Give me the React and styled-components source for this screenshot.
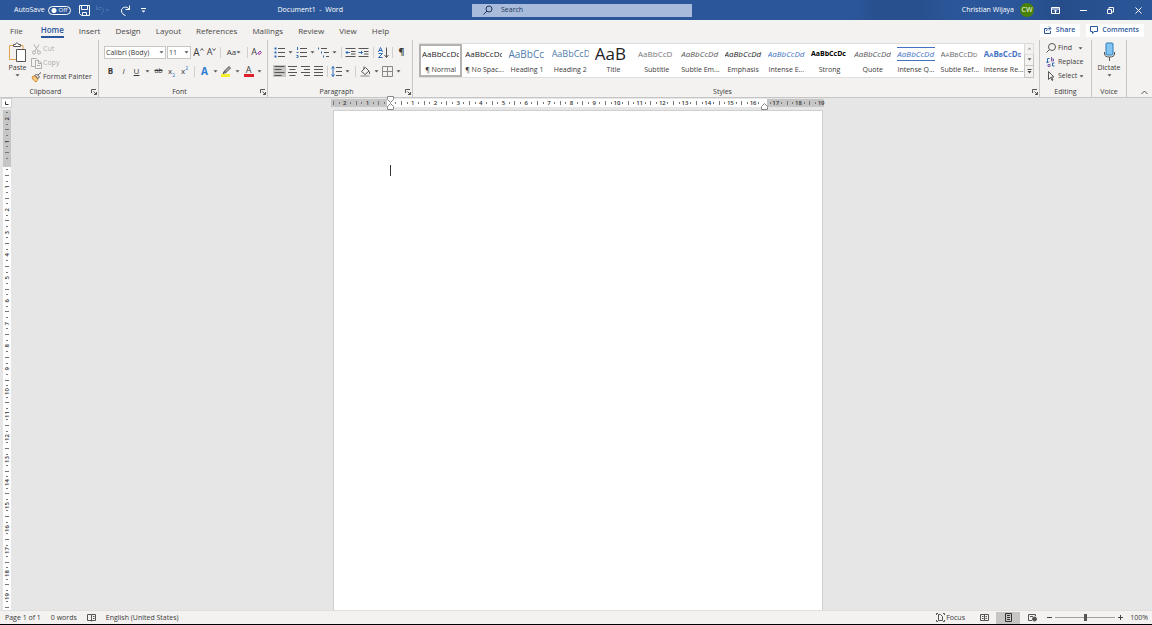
import React from "react";
import styled, { createGlobalStyle, css } from "styled-components";

const Global = createGlobalStyle`
  *, *::before, *::after { box-sizing: border-box; }
  html, body, #root { height: 100%; margin: 0; }
  body { font-family: "Open Sans", "Noto Sans", sans-serif; font-size: 7px; line-height: 10px; color: #3b3a39; overflow: hidden; }
  button, input, select { font: inherit; color: inherit; }
  button { border: 0; padding: 0; background: none; }
`;

/* ---------- shared parts ---------- */

const Window = styled.div`
  display: flex;
  flex-direction: column;
  height: 100vh;
  background: #e6e6e6;
  border-bottom: 1px solid #000;
`;

const Glyph = styled.svg`
  display: block;
  flex: none;
  width: ${(p) => p.$w || 11}px;
  height: ${(p) => p.$h || p.$w || 11}px;
  fill: none;
  stroke: ${(p) => p.$color || "#555"};
  stroke-width: 1;
`;

const Svg = ({ w = 11, h, color, children }) => (
  <Glyph $w={w} $h={h} $color={color} viewBox={`0 0 ${w} ${h || w}`} aria-hidden="true">
    {children}
  </Glyph>
);

const Arrow = ({ color = "#555" }) => (
  <Svg w={5} h={3} color="none">
    <path d="M0.5 0.3h4L2.5 2.5z" fill={color} />
  </Svg>
);

const IconButton = styled.button`
  display: flex;
  align-items: center;
  justify-content: center;
  flex: none;
  width: ${(p) => p.$w || 13}px;
  height: ${(p) => p.$h || 12}px;
  background: ${(p) => (p.$on ? "#c8c6c4" : "transparent")};
`;

const Divider = styled.span`
  flex: none;
  width: 1px;
  height: 11px;
  margin: 0 ${(p) => p.$gap || 2}px;
  background: #d2d0ce;
`;

const ArrowButton = ({ label }) => (
  <IconButton $w={9} aria-label={label}>
    <Arrow />
  </IconButton>
);

/* ---------- title bar ---------- */

const TitleBar = styled.header`
  display: grid;
  grid-template-columns: 1fr 220px 1fr;
  align-items: center;
  flex: none;
  height: 20px;
  padding-left: 12px;
  color: #fff;
  background: linear-gradient(90deg, #2b579a 0 74%, #28508f 76% 80%, #2b579a 83% 88%, #264d8a 92%, #2b579a);
`;

const TitleSide = styled.div`
  display: flex;
  align-items: center;
  justify-content: ${(p) => (p.$end ? "flex-end" : "flex-start")};
`;

const AutoSave = styled.label`
  display: flex;
  align-items: center;
  gap: 3px;
  margin: 0 7px 0 2px;
`;

const Switch = styled.span`
  display: grid;
  align-items: center;
  width: 23px;
  height: 9px;
  font-size: 6px;
  line-height: 9px;
  & > * { grid-area: 1 / 1; }
  & > span { padding-left: 11px; }
`;

const SwitchInput = styled.input`
  appearance: none;
  width: 23px;
  height: 9px;
  margin: 0;
  border: 1px solid #fff;
  border-radius: 5px;
  background: radial-gradient(circle at 5px 50%, #fff 0 2px, transparent 3px);
`;

const DocTitle = styled.h1`
  margin: 0 129px 0 auto;
  font-size: 7px;
  font-weight: 400;
  white-space: pre;
`;

const SearchBox = styled.label`
  display: flex;
  align-items: center;
  gap: 8px;
  height: 13px;
  padding-left: 11px;
  background: #a9bbdb;
`;

const SearchInput = styled.input`
  flex: 1;
  min-width: 0;
  padding: 0;
  border: 0;
  outline: 0;
  background: none;
  color: #1c3660;
  &::placeholder { color: #1c3660; opacity: 1; }
`;

const Avatar = styled.span`
  width: 14px;
  height: 14px;
  margin: 0 7px 0 6px;
  border-radius: 50%;
  background: #498205;
  line-height: 14px;
  text-align: center;
`;

function TitleRow() {
  return (
    <TitleBar>
      <TitleSide>
        <AutoSave>
          AutoSave
          <Switch>
            <SwitchInput type="checkbox" role="switch" />
            <span>Off</span>
          </Switch>
        </AutoSave>
        <IconButton aria-label="Save" $w={14}>
          <Svg w={11} color="#fff">
            <path d="M0.5 0.5h10v10h-8l-2-2zM2.5 0.5v4h6v-4M3.5 10.5v-3h4v3" />
          </Svg>
        </IconButton>
        <IconButton aria-label="Undo" $w={21}>
          <Svg w={10} color="#4a70ad">
            <path d="M1.5 0.5v4h4M1.5 4.5C4 1 9 2 8.5 6L6 9.5" />
          </Svg>
          <Arrow color="#4a70ad" />
        </IconButton>
        <IconButton aria-label="Redo" $w={26}>
          <Svg w={11} color="#fff">
            <path d="M9.5 0.5v4h-4M9.5 4.5C7 0.5 1 2 1.5 6c0 2 2 4 4 4.5" />
          </Svg>
        </IconButton>
        <IconButton aria-label="Customize Quick Access Toolbar" $w={9}>
          <Svg w={5} h={5} color="#fff">
            <path d="M0 0.5h5" />
            <path d="M0.5 2.5h4L2.5 4.5z" fill="#fff" stroke="none" />
          </Svg>
        </IconButton>
        <DocTitle>Document1  -  Word</DocTitle>
      </TitleSide>
      <SearchBox>
        <Svg w={10} color="#1c3660">
          <circle cx="6" cy="4" r="3" />
          <path d="M4 6L0.5 9.5" />
        </Svg>
        <SearchInput type="search" placeholder="Search" aria-label="Search" />
      </SearchBox>
      <TitleSide $end>
        <span>Christian Wijaya</span>
        <Avatar>CW</Avatar>
        <IconButton $w={28} aria-label="Ribbon Display Options">
          <Svg w={9} h={7} color="#fff">
            <path d="M0.5 0.5h8v6h-8zM0.5 2h8M4.5 6V3M3 4.5L4.5 3 6 4.5" />
          </Svg>
        </IconButton>
        <IconButton $w={28} aria-label="Minimize">
          <Svg w={7} color="#fff"><path d="M0 3.5h7" /></Svg>
        </IconButton>
        <IconButton $w={27} aria-label="Restore">
          <Svg w={7} color="#fff"><path d="M0.5 2.5h4v4h-4zM2 2.5v-2h4.5v4.5h-2" /></Svg>
        </IconButton>
        <IconButton $w={28} aria-label="Close">
          <Svg w={7} color="#fff"><path d="M0.5 0.5l6 6M6.5 0.5l-6 6" /></Svg>
        </IconButton>
      </TitleSide>
    </TitleBar>
  );
}

/* ---------- tabs ---------- */

const TabRow = styled.nav`
  display: flex;
  align-items: center;
  flex: none;
  height: 20px;
  padding: 0 8px 0 3px;
  background: #f3f2f1;
`;

const Tab = styled.button`
  height: 20px;
  padding: 0 8px 0 7px;
  font-size: 8px;
  line-height: 19px;
  color: #4a4846;
  &:first-child { margin-right: 3px; }
  ${(p) => p.$active && css`
    color: #2b579a;
    font-weight: 600;
    & > span {
      display: block;
      height: 16px;
      line-height: 15px;
      border-bottom: 2px solid #2b579a;
    }
  `}
`;

const TabAction = styled.button`
  display: flex;
  align-items: center;
  gap: 4px;
  height: 13px;
  padding: 0 5px 0 4px;
  background: #fff;
  color: #2b579a;
  font-weight: 600;
`;

const TabActions = styled.div`
  display: flex;
  gap: 6px;
  margin-left: auto;
`;

const TABS = ["File", "Home", "Insert", "Design", "Layout", "References", "Mailings", "Review", "View", "Help"];

function Tabs() {
  return (
    <TabRow>
      {TABS.map((t) => (
        <Tab key={t} $active={t === "Home"}><span>{t}</span></Tab>
      ))}
      <TabActions>
        <TabAction>
          <Svg w={8} color="#2b579a"><path d="M3 2.5H0.5v5h6V5M2.5 5c0-2 1.5-2.5 4-2.5M5 0.5l2 2-2 2" /></Svg>
          Share
        </TabAction>
        <TabAction>
          <Svg w={8} color="#2b579a"><path d="M0.5 0.5h7v5H4L2.5 7.5V5.5h-2z" /></Svg>
          Comments
        </TabAction>
      </TabActions>
    </TabRow>
  );
}

/* ---------- ribbon ---------- */

const RibbonBar = styled.section`
  display: flex;
  flex: none;
  height: 58px;
  background: #f3f2f1;
  border-bottom: 1px solid #c8c6c4;
`;

const Group = styled.div`
  display: flex;
  flex-direction: column;
  flex: ${(p) => (p.$w ? "none" : "1")};
  min-width: 0;
  width: ${(p) => (p.$w ? p.$w + "px" : "auto")};
  border-right: 1px solid #c8c6c4;
`;

const GroupBody = styled.div`
  display: flex;
  flex: 1;
  flex-direction: ${(p) => (p.$column ? "column" : "row")};
  gap: ${(p) => p.$gap || 0}px;
  padding: ${(p) => p.$pad || "0"};
`;

const GroupFoot = styled.div`
  display: grid;
  grid-template-columns: 1fr auto;
  align-items: center;
  height: 11px;
  text-align: center;
`;

const Launcher = styled.button`
  display: flex;
  width: 7px;
`;

function RibbonGroup({ name, width, launcher = true, children, ...body }) {
  return (
    <Group $w={width} role="group" aria-label={name}>
      <GroupBody {...body}>{children}</GroupBody>
      <GroupFoot>
        <span>{name}</span>
        {launcher && (
          <Launcher aria-label={`${name} settings`}>
            <Svg w={6}><path d="M0.5 4V0.5H5M2.5 2.5l3 3M5.5 3v2.5H3" /></Svg>
          </Launcher>
        )}
      </GroupFoot>
    </Group>
  );
}

const Row = styled.div`
  display: flex;
  align-items: center;
  height: 12px;
`;

const BigButton = styled.button`
  display: flex;
  flex-direction: column;
  align-items: center;
  gap: 1px;
  width: ${(p) => p.$w}px;
  height: 40px;
`;

const Stack = styled.div`
  display: flex;
  flex-direction: column;
  align-items: flex-start;
`;

const TextButton = styled.button`
  display: flex;
  align-items: center;
  gap: ${(p) => p.$gap || 2}px;
  height: 14px;
  white-space: nowrap;
  color: ${(p) => (p.disabled ? "#b1afad" : "#3b3a39")};
`;

const Combo = styled.div`
  display: grid;
  align-items: center;
  width: ${(p) => p.$w}px;
  height: 13px;
  border: 1px solid #c8c6c4;
  background: #fff;
  margin-right: 1px;
  & > * { grid-area: 1 / 1; }
  & > svg { justify-self: end; margin-right: 1px; pointer-events: none; }
`;

const Select = styled.select`
  appearance: none;
  width: 100%;
  height: 11px;
  padding: 0 0 0 1px;
  border: 0;
  background: none;
  line-height: 11px;
`;

const Letter = styled.span`
  font-size: ${(p) => p.$size || 8}px;
  line-height: 10px;
  font-weight: ${(p) => (p.$bold ? 700 : 400)};
  font-style: ${(p) => (p.$italic ? "italic" : "normal")};
  text-decoration: ${(p) => p.$line || "none"};
  & sub, & sup { font-size: 5px; line-height: 0; color: #2b6cb5; }
`;

const Painted = styled.span`
  display: block;
  width: 10px;
  height: 11px;
  font-size: 9px;
  line-height: 8px;
  text-align: center;
  border-bottom: 3px solid ${(p) => p.$color};
`;

const Outlined = styled.span`
  font-size: 10px;
  line-height: 11px;
  font-weight: 700;
  color: #2b7cd3;
`;

function Clipboard() {
  return (
    <RibbonGroup name="Clipboard" width={99} $pad="2px 0 0 6px" $gap={2}>
      <BigButton $w={23}>
        <Svg w={17} h={20}>
          <path d="M4 3.5H0.5v14H7M11 3.5h3V7" stroke="#e3a04b" />
          <path d="M4.5 4.5v-2h2c0-2 3-2 3 0h2v2z" fill="#fff" />
          <path d="M7.5 7.5h9v12h-9z" fill="#fff" />
        </Svg>
        <span>Paste</span>
        <Arrow />
      </BigButton>
      <Stack>
        <TextButton disabled $gap={1}>
          <Svg w={11} color="#b1afad"><path d="M3 0.5L7 7M8 0.5L4 7" /><circle cx="3" cy="8.5" r="1.5" /><circle cx="8" cy="8.5" r="1.5" /></Svg>
          Cut
        </TextButton>
        <TextButton disabled $gap={1}>
          <Svg w={11} color="#b1afad"><path d="M4 8.5H0.5v-8h5l1 1M4.5 2.5H8l2.5 2.5v5.5h-6zM7.5 3v2.5h3M6 7.5h3" /></Svg>
          Copy
        </TextButton>
        <TextButton $gap={1}>
          <Svg w={11}><path d="M1 5l3-1.5L7 7 5 10c-2-1-3-2-4-5z" fill="#f6c98a" stroke="#d98b2b" /><path d="M4 3.5L5.5 2 8.5 5 7 6.5zM7 3l3-2.5" /></Svg>
          Format Painter
        </TextButton>
      </Stack>
    </RibbonGroup>
  );
}

function FontGroup() {
  return (
    <RibbonGroup name="Font" width={169} $column $gap={7} $pad="6px 0 0 5px">
      <Row>
        <Combo $w={62}>
          <Select aria-label="Font"><option>Calibri (Body)</option></Select>
          <Arrow />
        </Combo>
        <Combo $w={24}>
          <Select aria-label="Font size"><option>11</option></Select>
          <Arrow />
        </Combo>
        <IconButton aria-label="Increase font size">
          <Letter $size={10}>A</Letter>
          <Svg w={4} h={9}><path d="M0.5 2.5l1.5-2 1.5 2" /></Svg>
        </IconButton>
        <IconButton aria-label="Decrease font size">
          <Letter $size={9}>A</Letter>
          <Svg w={4} h={9}><path d="M0.5 0.5l1.5 2 1.5-2" /></Svg>
        </IconButton>
        <Divider />
        <IconButton $w={22} aria-label="Change case"><Letter $size={8}>Aa</Letter><Arrow /></IconButton>
        <Divider />
        <IconButton aria-label="Clear formatting">
          <Letter $size={9}>A</Letter>
          <Svg w={5}><path d="M0.5 3.5L3 1l1.5 1.5-2 2z" stroke="#a349a4" fill="#e3b9e3" /></Svg>
        </IconButton>
      </Row>
      <Row>
        <IconButton aria-label="Bold"><Letter $bold>B</Letter></IconButton>
        <IconButton aria-label="Italic"><Letter $italic>I</Letter></IconButton>
        <IconButton aria-label="Underline"><Letter $line="underline">U</Letter></IconButton>
        <ArrowButton label="Underline style" />
        <IconButton aria-label="Strikethrough"><Letter $size={7} $line="line-through">ab</Letter></IconButton>
        <IconButton aria-label="Subscript"><Letter>x<sub>2</sub></Letter></IconButton>
        <IconButton aria-label="Superscript"><Letter>x<sup>2</sup></Letter></IconButton>
        <Divider $gap={3} />
        <IconButton aria-label="Text effects"><Outlined>A</Outlined></IconButton>
        <ArrowButton label="Text effects options" />
        <IconButton aria-label="Highlight">
          <Svg w={11}>
            <path d="M3.5 5L8 0.5 9.5 2 5 6.5zM3.5 5L2 7.5 5 6.5" fill="#aaa" />
            <path d="M0 9.5h9" stroke="#f5f02a" strokeWidth="3" />
          </Svg>
        </IconButton>
        <ArrowButton label="Highlight colour" />
        <IconButton aria-label="Font color"><Painted $color="#e0202c">A</Painted></IconButton>
        <ArrowButton label="Font colour options" />
      </Row>
    </RibbonGroup>
  );
}

const LINES = {
  left: "M0.5 1.5h10M0.5 4.5h7M0.5 7.5h10M0.5 10.5h7",
  center: "M1 1.5h9M2.5 4.5h6M1 7.5h9M2.5 10.5h6",
  right: "M1 1.5h9M4 4.5h6M1 7.5h9M4 10.5h6",
  justify: "M1 1.5h9M1 4.5h9M1 7.5h9M1 10.5h9",
};

function Paragraph() {
  return (
    <RibbonGroup name="Paragraph" width={145} $column $gap={7} $pad="6px 0 0 5px">
      <Row>
        <IconButton aria-label="Bullets">
          <Svg><path d="M4 1.5h7M4 5.5h7M4 9.5h7" /><path d="M0.5 1.5h2M0.5 5.5h2M0.5 9.5h2" stroke="#2b6cb5" strokeWidth="2" /></Svg>
        </IconButton>
        <ArrowButton label="Bullet library" />
        <IconButton aria-label="Numbering">
          <Svg><path d="M4 1.5h7M4 5.5h7M4 9.5h7" /><path d="M1.5 0v3M0.5 5.5h2M0.5 8.5h1.5v2H0.5" stroke="#2b6cb5" /></Svg>
        </IconButton>
        <ArrowButton label="Numbering library" />
        <IconButton aria-label="Multilevel list">
          <Svg><path d="M3 1.5h6M6 5.5h5M8 9.5h3" /><path d="M0.5 0.5v2M3.5 4.5v2M5.5 8.5v2" stroke="#2b6cb5" /></Svg>
        </IconButton>
        <ArrowButton label="List library" />
        <Divider />
        <IconButton aria-label="Decrease indent">
          <Svg><path d="M0.5 1.5h10M6 4.5h4.5M6 7h4.5M0.5 9.5h10" /><path d="M5 5.5H1M2.5 4L1 5.5 2.5 7" stroke="#2b6cb5" /></Svg>
        </IconButton>
        <IconButton aria-label="Increase indent">
          <Svg><path d="M0.5 1.5h10M6 4.5h4.5M6 7h4.5M0.5 9.5h10" /><path d="M0.5 5.5h4M3 4l1.5 1.5L3 7" stroke="#2b6cb5" /></Svg>
        </IconButton>
        <Divider $gap={3} />
        <IconButton aria-label="Sort">
          <Svg><path d="M0.5 5L2.5 0.5 4.5 5M1 3.5h3M0.5 6.5h4l-4 4h4" stroke="#2b6cb5" /><path d="M8.5 0.5v10M6.5 8l2 2.5 2-2.5" /></Svg>
        </IconButton>
        <Divider />
        <IconButton aria-label="Show paragraph marks"><Letter $size={9} $bold>¶</Letter></IconButton>
      </Row>
      <Row>
        {Object.entries(LINES).map(([k, d]) => (
          <IconButton key={k} aria-label={`Align ${k}`} $on={k === "left"}>
            <Svg h={12}><path d={d} /></Svg>
          </IconButton>
        ))}
        <Divider />
        <IconButton aria-label="Line spacing">
          <Svg><path d="M5 1.5h6M5 5.5h6M5 9.5h6" /><path d="M2 0.5v10M0.5 2.5L2 0.5l1.5 2M0.5 8.5l1.5 2 1.5-2" stroke="#2b6cb5" /></Svg>
        </IconButton>
        <ArrowButton label="Line spacing options" />
        <Divider $gap={3} />
        <IconButton aria-label="Shading">
          <Svg><path d="M1.5 5.5L5.5 1.5 9 5 5 8.5zM4 3V0.5M9.5 5.5v2.5" /><path d="M0.5 10h9" stroke="#bbb" strokeWidth="2" /></Svg>
        </IconButton>
        <ArrowButton label="Shading colour" />
        <IconButton aria-label="Borders">
          <Svg><path d="M0.5 0.5h10v10h-10zM5.5 0.5v10M0.5 5.5h10" stroke="#888" /></Svg>
        </IconButton>
        <ArrowButton label="Border options" />
      </Row>
    </RibbonGroup>
  );
}

/* ---------- style gallery ---------- */

const Gallery = styled.div`
  display: grid;
  grid-template-columns: repeat(14, minmax(0, 1fr));
  flex: 1;
  height: 35px;
  background: #fff;
  border: 1px solid #e1dfdd;
  border-width: 1px 0;
`;

const StyleTile = styled.button`
  display: flex;
  flex-direction: column;
  justify-content: space-between;
  min-width: 0;
  padding: 2px 3px;
  ${(p) => p.$on && css`box-shadow: inset 0 0 0 2px #b5b3b1;`}
`;

const Sample = styled.span`
  display: flex;
  align-items: center;
  width: 100%;
  height: 16px;
  overflow: hidden;
  white-space: nowrap;
  text-align: left;
  font-size: ${(p) => p.$size || 8}px;
  line-height: 16px;
  color: ${(p) => p.$color || "#222"};
  font-weight: ${(p) => (p.$bold ? 700 : 400)};
  font-style: ${(p) => (p.$italic ? "italic" : "normal")};
  font-variant-caps: ${(p) => (p.$caps ? "small-caps" : "normal")};
  ${(p) => p.$ruled && css`
    height: 14px;
    margin-top: 1px;
    border: solid #4472c4;
    border-width: 1px 0;
  `}
`;

const TileName = styled.span`
  width: 100%;
  text-align: center;
  white-space: nowrap;
`;

const GalleryNav = styled.div`
  display: grid;
  grid-template-rows: repeat(3, 1fr);
  width: 10px;
  height: 35px;
  & > button {
    display: flex;
    align-items: center;
    justify-content: center;
    border: 1px solid #c8c6c4;
  }
  & > button:first-child { opacity: 0.5; }
  & > button + button { border-top: 0; }
`;

const STYLES = [
  { name: "¶ Normal", text: "AaBbCcDc", $on: true },
  { name: "¶ No Spac...", text: "AaBbCcDc" },
  { name: "Heading 1", text: "AaBbCc", $size: 10, $color: "#4f7cab" },
  { name: "Heading 2", text: "AaBbCcD", $size: 9, $color: "#4f7cab" },
  { name: "Title", text: "AaB", $size: 17 },
  { name: "Subtitle", text: "AaBbCcD", $color: "#777" },
  { name: "Subtle Em...", text: "AaBbCcDd", $italic: true, $color: "#555" },
  { name: "Emphasis", text: "AaBbCcDd", $italic: true },
  { name: "Intense E...", text: "AaBbCcDd", $italic: true, $color: "#4472c4" },
  { name: "Strong", text: "AaBbCcDc", $size: 7, $bold: true, $color: "#000" },
  { name: "Quote", text: "AaBbCcDd", $italic: true, $color: "#555" },
  { name: "Intense Q...", text: "AaBbCcDd", $italic: true, $color: "#4472c4", $ruled: true },
  { name: "Subtle Ref...", text: "AaBbCcDd", $caps: true, $color: "#666" },
  { name: "Intense Re...", text: "AaBbCcDd", $caps: true, $bold: true, $color: "#4472c4" },
];

function Styles() {
  return (
    <RibbonGroup name="Styles" $pad="3px 5px 0 6px">
      <Gallery>
        {STYLES.map(({ name, text, $on, ...look }) => (
          <StyleTile key={name} $on={$on}>
            <Sample {...look}>{text}</Sample>
            <TileName>{name}</TileName>
          </StyleTile>
        ))}
      </Gallery>
      <GalleryNav>
        <button aria-label="Previous styles"><Svg w={5} h={3} color="none"><path d="M0.5 2.5h4L2.5 0.5z" fill="#555" /></Svg></button>
        <button aria-label="Next styles"><Arrow /></button>
        <button aria-label="More styles"><Svg w={5} color="none"><path d="M0.5 0h4v1h-4zM0.5 2h4L2.5 4.5z" fill="#444" /></Svg></button>
      </GalleryNav>
    </RibbonGroup>
  );
}

const RibbonEnd = styled.div`
  display: flex;
  align-items: flex-end;
  justify-content: flex-end;
  width: 25px;
`;

function Ribbon() {
  return (
    <RibbonBar>
      <Clipboard />
      <FontGroup />
      <Paragraph />
      <Styles />
      <RibbonGroup name="Editing" width={52} launcher={false} $pad="1px 0 0 6px">
        <Stack>
          <TextButton>
            <Svg w={10}><circle cx="6" cy="4" r="3.5" /><path d="M3.5 6.5l-3 3" /></Svg>
            Find&nbsp;&nbsp;<Arrow />
          </TextButton>
          <TextButton>
            <Svg w={10}><path d="M3.5 1.5H1.5V6M0 4.5L1.5 6 3 4.5M8.5 6h-2v3h2" stroke="#2b6cb5" /><path d="M5.5 0v4h2v-2h-2M2 9.5h2v-2H2z" stroke="#7d5fa8" /></Svg>
            Replace
          </TextButton>
          <TextButton>
            <Svg w={10}><path d="M2.5 0.5v8l2-2 1.5 3 1-0.5L5.5 6H8z" /></Svg>
            Select<Arrow />
          </TextButton>
        </Stack>
      </RibbonGroup>
      <RibbonGroup name="Voice" width={35} launcher={false} $pad="2px 0 0 0">
        <BigButton $w={34}>
          <Svg w={13} h={20}>
            <path d="M1.5 10v2c0 2 2 3 5 3s5-1 5-3v-2M6.5 15v4" />
            <rect x="3" y="1" width="7" height="12" rx="1" fill="#83c5f2" stroke="#2b7cb8" />
          </Svg>
          <span>Dictate</span>
          <Arrow />
        </BigButton>
      </RibbonGroup>
      <RibbonEnd>
        <IconButton aria-label="Collapse the ribbon" $w={16} $h={9}>
          <Svg w={7} h={5}><path d="M0.5 4l3-3 3 3" /></Svg>
        </IconButton>
      </RibbonEnd>
    </RibbonBar>
  );
}

/* ---------- rulers and document ---------- */

const Workspace = styled.main`
  display: flex;
  flex: 1;
  min-height: 0;
`;

const SideRail = styled.div`
  display: flex;
  flex-direction: column;
  flex: none;
  width: 13px;
`;

const TabStop = styled.button`
  display: flex;
  align-items: center;
  justify-content: center;
  width: 11px;
  height: 10px;
  margin: 0 0 2px 1px;
  background: #fff;
  border: 1px solid #d2d0ce;
`;

const VRuler = styled.div`
  display: flex;
  flex-direction: column;
  flex: 1;
  min-height: 0;
  width: 8px;
  margin-left: 3px;
`;

const HRuler = styled.div`
  display: flex;
  flex: none;
  width: 493px;
  height: 8px;
  margin: 1px 2px 3px 0;
`;

const Slot = styled.span`
  display: flex;
  flex: 1 1 0;
  min-width: 0;
  min-height: 0;
  align-items: center;
  justify-content: center;
  overflow: visible;
  white-space: nowrap;
  font-size: 6px;
  line-height: 8px;
  color: #333;
  background: ${(p) => (p.$margin ? "#c6c6c6" : "#fff")};
  & > b {
    z-index: 1;
    font-weight: 600;
    ${(p) => p.$vertical && css`writing-mode: vertical-rl; transform: rotate(180deg);`}
  }
`;

const Tick = styled.i`
  flex: none;
  width: ${(p) => (p.$vertical && p.$half ? 4 : p.$vertical ? 2 : 1)}px;
  height: ${(p) => (!p.$vertical && p.$half ? 4 : p.$vertical ? 1 : 2)}px;
  background: #777;
`;

const Marker = styled.span`
  z-index: 2;
  flex: none;
`;

function marks(from, to, end, vertical) {
  const out = [];
  for (let k = from; k <= to; k++) {
    const cm = Math.abs(k / 4);
    const whole = k % 4 === 0;
    out.push(
      <Slot key={k} $vertical={vertical} $margin={k < 0 || k > end || (vertical && k === 0)}>
        {k === 0 || k === end ? (
          !vertical && (
            <Marker>
              <Svg w={7} h={14} color="#888">
                {k === 0 && <path d="M0.5 0.5h6v3l-3 3-3-3z" fill="#fff" />}
                <path d="M0.5 13.5v-3l3-3 3 3v3z" fill="#fff" />
              </Svg>
            </Marker>
          )
        ) : whole ? (
          <b>{cm}</b>
        ) : (
          <Tick $vertical={vertical} $half={k % 2 === 0} />
        )}
      </Slot>
    );
  }
  return out;
}

const Canvas = styled.div`
  display: flex;
  flex-direction: column;
  align-items: center;
  flex: 1;
  min-width: 0;
  padding-right: 9px;
`;

const Paper = styled.article`
  flex: 1;
  width: 490px;
  padding: 54px 56px 0;
  background: #fff;
  border: 1px solid #cfcfcf;
  border-bottom: 0;
`;

const Caret = styled.span`
  display: block;
  width: 1px;
  height: 11px;
  background: #333;
`;

/* ---------- status bar ---------- */

const StatusBar = styled.footer`
  display: flex;
  align-items: center;
  flex: none;
  height: 14px;
  padding: 0 4px 0 5px;
  background: #f3f2f1;
  border-top: 1px solid #e1dfdd;
`;

const StatusItem = styled.button`
  display: flex;
  align-items: center;
  gap: 1px;
  margin-right: 10px;
  white-space: nowrap;
`;

const Views = styled.div`
  display: flex;
  align-items: center;
  margin-left: auto;
  & > ${StatusItem} { margin-right: 7px; }
`;

const Zoom = styled.input`
  appearance: none;
  width: 60px;
  height: 8px;
  margin: 0 1px;
  background: linear-gradient(#a19f9d, #a19f9d) center / 100% 1px no-repeat;
  &::-webkit-slider-thumb {
    appearance: none;
    width: 3px;
    height: 7px;
    background: #555;
  }
`;

const ZoomValue = styled.button`
  width: 20px;
  margin-left: 4px;
  text-align: right;
`;

export default function App() {
  return (
    <>
      <Global />
      <Window>
        <TitleRow />
        <Tabs />
        <Ribbon />
        <Workspace>
          <SideRail>
            <TabStop aria-label="Left tab">
              <Svg w={5} color="#333"><path d="M1.5 0.5v3h3" /></Svg>
            </TabStop>
            <VRuler>{marks(-9, 78, 200, true)}</VRuler>
          </SideRail>
          <Canvas>
            <HRuler>{marks(-10, 76, 66, false)}</HRuler>
            <Paper aria-label="Document1">
              <Caret />
            </Paper>
          </Canvas>
        </Workspace>
        <StatusBar>
          <StatusItem>Page 1 of 1</StatusItem>
          <StatusItem>0 words</StatusItem>
          <StatusItem aria-label="Proofing">
            <Svg w={9}><path d="M4.5 1.5h-4v6h8v-6zM4.5 1.5v7M6 3.5h1.5M6 5.5h1.5" /></Svg>
          </StatusItem>
          <StatusItem>English (United States)</StatusItem>
          <Views>
            <StatusItem>
              <Svg w={9}><path d="M0.5 2v-1.5H2M7 0.5h1.5V2M0.5 7v1.5H2M8.5 7v1.5H7M2.5 1.5h2l2 2v4h-4z" /></Svg>
              Focus
            </StatusItem>
            <IconButton $w={24} aria-label="Read mode">
              <Svg w={9}><path d="M0.5 1.5h8v6h-8zM4.5 1.5v6M2 3.5h1.5M2 5.5h1.5M5.5 3.5H7M5.5 5.5H7" /></Svg>
            </IconButton>
            <IconButton $w={24} $on aria-label="Print layout">
              <Svg w={9}><path d="M1.5 0.5h6v8h-6zM3 2.5h3M3 4.5h3M3 6.5h3" stroke="#333" /></Svg>
            </IconButton>
            <IconButton $w={24} aria-label="Web layout">
              <Svg w={9}><path d="M4 7.5H0.5v-6h7V3M2 3.5h3" /><circle cx="6.5" cy="6" r="2" fill="#555" /></Svg>
            </IconButton>
            <IconButton $w={10} aria-label="Zoom out"><Svg w={5} color="#444"><path d="M0 2.5h5" /></Svg></IconButton>
            <Zoom type="range" min="10" max="190" defaultValue="100" aria-label="Zoom" />
            <IconButton $w={8} aria-label="Zoom in"><Svg w={5} color="#444"><path d="M0 2.5h5M2.5 0v5" /></Svg></IconButton>
            <ZoomValue>100%</ZoomValue>
          </Views>
        </StatusBar>
      </Window>
    </>
  );
}
